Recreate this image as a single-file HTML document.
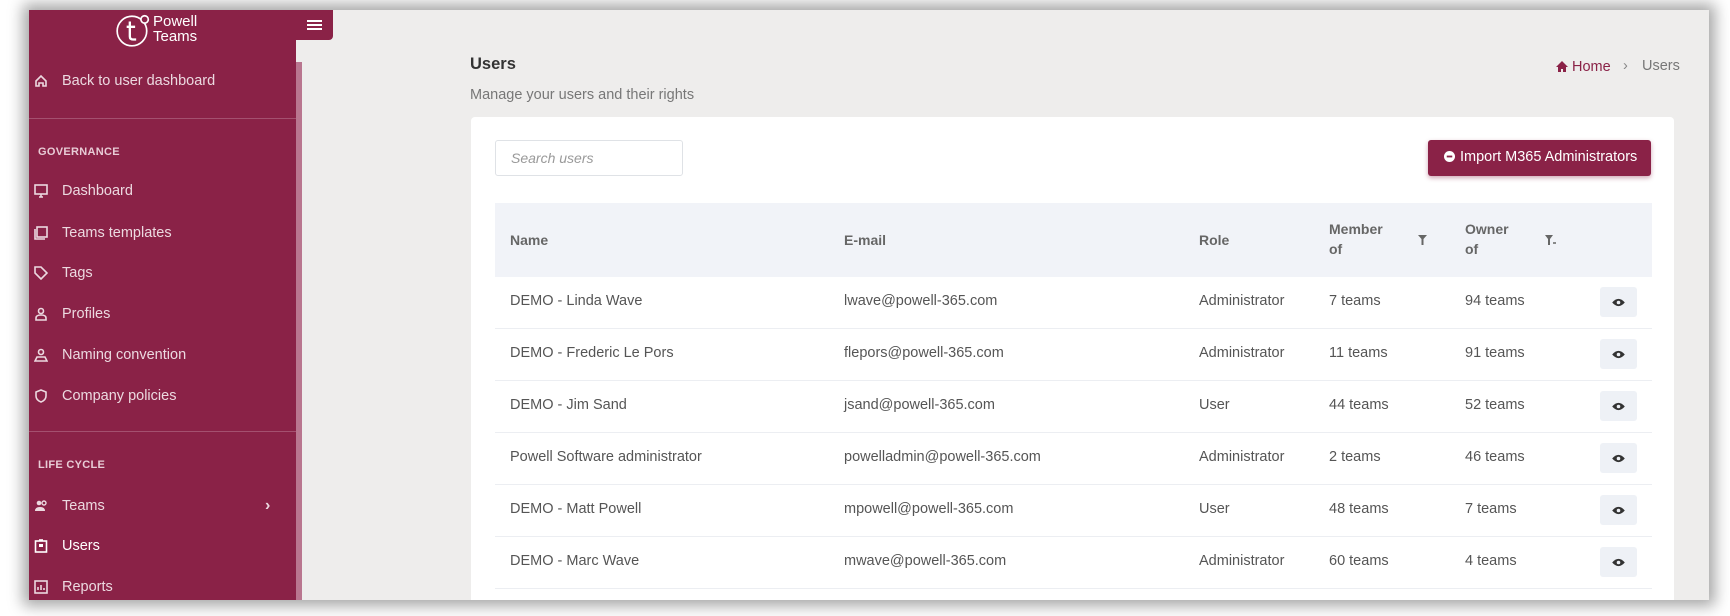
<!DOCTYPE html>
<html><head><meta charset="utf-8"><style>
*{box-sizing:border-box;margin:0;padding:0}
body{width:1730px;height:616px;background:#fff;font-family:"Liberation Sans",sans-serif;position:relative;overflow:hidden}
.app{position:absolute;left:29px;top:10px;width:1680px;height:590px;background:#eeedec;box-shadow:0 0 14px 6px rgba(0,0,0,.35);overflow:hidden}
.side{position:absolute;left:0;top:0;width:267px;height:590px;background:#8a2247;color:#e9d3db}
.scroll{position:absolute;left:267px;top:52px;width:6px;height:538px;background:#b9768f}
.tab{position:absolute;left:267px;top:0;width:37px;height:30px;background:#8a2247;border-radius:0 0 4px 0}
.it{position:absolute;left:5px;font-size:14.5px;color:#ecd9e0;display:flex;align-items:center}
.it svg{width:14px;height:14px;margin-right:14px}
.sec{position:absolute;left:9px;font-size:11px;font-weight:bold;letter-spacing:.3px;color:#e8ccd6}
.hr{position:absolute;left:0;width:267px;height:1px;background:#a4506f}
.t{position:absolute;font-size:14.5px;color:#555}
.card{position:absolute;left:442px;top:107px;width:1203px;height:500px;background:#fff;border-radius:4px}
.row{position:absolute;left:24px;width:1157px;height:52px;border-bottom:1px solid #eceef2}
.row span{position:absolute;top:16px;font-size:14.5px;color:#555}
.eye{position:absolute;left:1105px;top:10px;width:37px;height:30px;background:#eef1f6;border-radius:3px;display:flex;align-items:center;justify-content:center}
</style></head><body>
<div class="app">
 <div class="side">
  <svg style="position:absolute;left:85px;top:1px" width="38" height="38" viewBox="0 0 36 36"><circle cx="17" cy="19" r="14" fill="none" stroke="#fff" stroke-width="1.6"/><circle cx="29" cy="8" r="3.5" fill="#8a2247" stroke="#fff" stroke-width="1.6"/><path d="M15 10v14q0 3 3 3h3M12 15h8" fill="none" stroke="#fff" stroke-width="2.2"/></svg>
  <div style="position:absolute;left:124px;top:4px;color:#fff;font-size:15px;line-height:15px">Powell<br>Teams</div>
  <div class="it" style="top:63px"><svg viewBox="0 0 14 14"><path d="M2 7L7 2l5 5v5H9V9H5v3H2z" fill="none" stroke="#ecd9e0" stroke-width="1.6"/></svg>Back to user dashboard</div>
  <div class="hr" style="top:108px"></div>
  <div class="sec" style="top:136px">GOVERNANCE</div>
  <div class="it" style="top:173px"><svg viewBox="0 0 14 14"><rect x="1" y="1" width="12" height="9" fill="none" stroke="#ecd9e0" stroke-width="1.6"/><path d="M5 13h4M7 10v3" stroke="#ecd9e0" stroke-width="1.6"/></svg>Dashboard</div>
  <div class="it" style="top:215px"><svg viewBox="0 0 14 14"><rect x="3" y="1" width="10" height="10" fill="none" stroke="#ecd9e0" stroke-width="1.6"/><path d="M1 3v10h10" fill="none" stroke="#ecd9e0" stroke-width="1.6"/></svg>Teams templates</div>
  <div class="it" style="top:255px"><svg viewBox="0 0 14 14"><path d="M1 1h6l6 6-6 6-6-6z" fill="none" stroke="#ecd9e0" stroke-width="1.6"/></svg>Tags</div>
  <div class="it" style="top:296px"><svg viewBox="0 0 14 14"><circle cx="7" cy="4" r="2.5" fill="none" stroke="#ecd9e0" stroke-width="1.6"/><path d="M2 13v-2q0-3 5-3t5 3v2z" fill="none" stroke="#ecd9e0" stroke-width="1.6"/></svg>Profiles</div>
  <div class="it" style="top:337px"><svg viewBox="0 0 14 14"><circle cx="7" cy="4" r="2.5" fill="none" stroke="#ecd9e0" stroke-width="1.6"/><path d="M1 13h12l-2-4H3z" fill="none" stroke="#ecd9e0" stroke-width="1.6"/></svg>Naming convention</div>
  <div class="it" style="top:378px"><svg viewBox="0 0 14 14"><path d="M7 1l5 2v4q0 4-5 6-5-2-5-6V3z" fill="none" stroke="#ecd9e0" stroke-width="1.6"/></svg>Company policies</div>
  <div class="hr" style="top:421px"></div>
  <div class="sec" style="top:449px">LIFE CYCLE</div>
  <div class="it" style="top:488px"><svg viewBox="0 0 14 14"><circle cx="5" cy="4" r="2.3" fill="#ecd9e0"/><circle cx="10" cy="4" r="2" fill="none" stroke="#ecd9e0" stroke-width="1.4"/><path d="M1 12q0-4 5-4t5 4z" fill="#ecd9e0"/></svg>Teams</div>
  <div style="position:absolute;left:236px;top:487px;color:#ecd9e0;font-size:16px;font-weight:bold">›</div>
  <div class="it" style="top:528px;color:#fff"><svg viewBox="0 0 14 14"><rect x="1.5" y="2" width="11" height="11" fill="none" stroke="#fff" stroke-width="1.6"/><rect x="5" y="5" width="4" height="3" fill="#fff"/><path d="M5 1h4" stroke="#fff" stroke-width="1.6"/></svg>Users</div>
  <div class="it" style="top:569px"><svg viewBox="0 0 14 14"><rect x="1" y="1" width="12" height="12" fill="none" stroke="#ecd9e0" stroke-width="1.6"/><path d="M4 10V7M7 10V5M10 10V8" stroke="#ecd9e0" stroke-width="1.6"/></svg>Reports</div>
 </div>
 <div class="scroll"></div>
 <div class="tab"><svg style="margin:9px 0 0 11px" width="15" height="12" viewBox="0 0 15 12"><path d="M0 2h15M0 6h15M0 10h15" stroke="#fff" stroke-width="2"/></svg></div>
 <div class="t" style="left:441px;top:45px;font-size:16.5px;font-weight:bold;color:#333">Users</div>
 <div class="t" style="left:441px;top:77px;font-size:14.5px;color:#777">Manage your users and their rights</div>
 <div class="t" style="left:1527px;top:49px;color:#8a2247;font-size:14.5px"><svg width="12" height="11" viewBox="0 0 12 11" style="vertical-align:-1px;margin-right:4px"><path d="M6 0L0 6h2v5h3V8h2v3h3V6h2z" fill="#8a2247"/></svg>Home</div>
 <div class="t" style="left:1594px;top:48px;color:#888">›</div>
 <div class="t" style="left:1613px;top:48px;color:#777">Users</div>
 <div class="card">
  <div style="position:absolute;left:24px;top:23px;width:188px;height:36px;border:1px solid #dfe2e6;border-radius:3px;padding:9px 15px;font-size:14px;font-style:italic;color:#999">Search users</div>
  <div style="position:absolute;left:957px;top:23px;width:223px;height:36px;background:#8a2247;border-radius:3px;box-shadow:0 2px 5px rgba(138,34,71,.4);color:#fff;font-size:14.5px;padding:9px 0 0 16px"><svg width="11" height="11" viewBox="0 0 12 12" style="vertical-align:-1px;margin-right:5px"><circle cx="6" cy="6" r="6" fill="#fff"/><path d="M3 6h6" stroke="#8a2247" stroke-width="2"/></svg>Import M365 Administrators</div>
  <div style="position:absolute;left:24px;top:86px;width:1157px;height:74px;background:#f1f3f8;font-size:14px;font-weight:bold;color:#666">
   <span style="position:absolute;left:15px;top:29px">Name</span>
   <span style="position:absolute;left:349px;top:29px">E-mail</span>
   <span style="position:absolute;left:704px;top:29px">Role</span>
   <span style="position:absolute;left:834px;top:16px;line-height:20px">Member<br>of</span>
   <span style="position:absolute;left:970px;top:16px;line-height:20px">Owner<br>of</span>
   <svg style="position:absolute;left:923px;top:32px" width="9" height="10" viewBox="0 0 9 10"><path d="M0 0h9L5.5 4v6h-2V4z" fill="#666"/></svg>
   <svg style="position:absolute;left:1050px;top:32px" width="11" height="10" viewBox="0 0 11 10"><path d="M0 0h8L5 4v6H3V4z" fill="#666"/><path d="M8 8h3" stroke="#666" stroke-width="1.5"/></svg>
  </div>
  <div class="row" style="top:160px"><span style="left:15px">DEMO - Linda Wave</span><span style="left:349px">lwave@powell-365.com</span><span style="left:704px">Administrator</span><span style="left:834px">7 teams</span><span style="left:970px">94 teams</span><div class="eye"><svg width="13" height="9" viewBox="0 0 14 10"><path d="M0 5Q7-3 14 5Q7 13 0 5z" fill="#333"/><circle cx="7" cy="5" r="2" fill="#eef1f6"/></svg></div></div>
  <div class="row" style="top:212px"><span style="left:15px">DEMO - Frederic Le Pors</span><span style="left:349px">flepors@powell-365.com</span><span style="left:704px">Administrator</span><span style="left:834px">11 teams</span><span style="left:970px">91 teams</span><div class="eye"><svg width="13" height="9" viewBox="0 0 14 10"><path d="M0 5Q7-3 14 5Q7 13 0 5z" fill="#333"/><circle cx="7" cy="5" r="2" fill="#eef1f6"/></svg></div></div>
  <div class="row" style="top:264px"><span style="left:15px">DEMO - Jim Sand</span><span style="left:349px">jsand@powell-365.com</span><span style="left:704px">User</span><span style="left:834px">44 teams</span><span style="left:970px">52 teams</span><div class="eye"><svg width="13" height="9" viewBox="0 0 14 10"><path d="M0 5Q7-3 14 5Q7 13 0 5z" fill="#333"/><circle cx="7" cy="5" r="2" fill="#eef1f6"/></svg></div></div>
  <div class="row" style="top:316px"><span style="left:15px">Powell Software administrator</span><span style="left:349px">powelladmin@powell-365.com</span><span style="left:704px">Administrator</span><span style="left:834px">2 teams</span><span style="left:970px">46 teams</span><div class="eye"><svg width="13" height="9" viewBox="0 0 14 10"><path d="M0 5Q7-3 14 5Q7 13 0 5z" fill="#333"/><circle cx="7" cy="5" r="2" fill="#eef1f6"/></svg></div></div>
  <div class="row" style="top:368px"><span style="left:15px">DEMO - Matt Powell</span><span style="left:349px">mpowell@powell-365.com</span><span style="left:704px">User</span><span style="left:834px">48 teams</span><span style="left:970px">7 teams</span><div class="eye"><svg width="13" height="9" viewBox="0 0 14 10"><path d="M0 5Q7-3 14 5Q7 13 0 5z" fill="#333"/><circle cx="7" cy="5" r="2" fill="#eef1f6"/></svg></div></div>
  <div class="row" style="top:420px"><span style="left:15px">DEMO - Marc Wave</span><span style="left:349px">mwave@powell-365.com</span><span style="left:704px">Administrator</span><span style="left:834px">60 teams</span><span style="left:970px">4 teams</span><div class="eye"><svg width="13" height="9" viewBox="0 0 14 10"><path d="M0 5Q7-3 14 5Q7 13 0 5z" fill="#333"/><circle cx="7" cy="5" r="2" fill="#eef1f6"/></svg></div></div>
 </div>
</div>
</body></html>
